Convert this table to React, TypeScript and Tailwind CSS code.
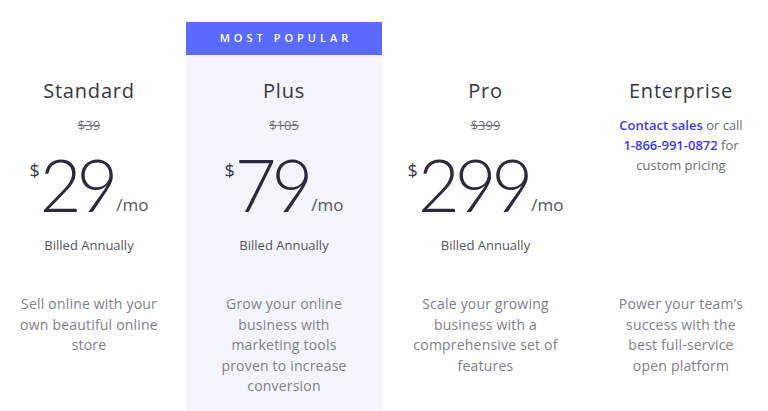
import React from 'react';

interface Plan {
  name: string;
  was: string;
  price: string;
  desc: string[];
}

const plans: Plan[] = [
  { name: 'Standard', was: '$39', price: '29', desc: ['Sell online with your', 'own beautiful online', 'store'] },
  {
    name: 'Plus',
    was: '$105',
    price: '79',
    desc: ['Grow your online', 'business with', 'marketing tools', 'proven to increase', 'conversion'],
  },
  { name: 'Pro', was: '$399', price: '299', desc: ['Scale your growing', 'business with a', 'comprehensive set of', 'features'] },
];

const Lines = ({ lines, className }: { lines: string[]; className: string }) => (
  <p className={className}>
    {lines.map((l, i) => (
      <span key={i} className="block whitespace-nowrap">
        {l}
      </span>
    ))}
  </p>
);

const PlanBody = ({ plan }: { plan: Plan }) => (
  <div className="flex flex-col items-center pt-[22px] text-center">
    <h2 className="text-[20px] leading-[28px] tracking-[0.8px] text-[#363640]">{plan.name}</h2>
    <div className="mt-[10px] text-[13px] leading-[20px] text-[#707077] line-through">{plan.was}</div>
    <div className="mt-[13px] flex items-start text-[#2b2a3d]">
      <span className="mt-[13px] text-[18px] leading-none text-[#3a3a48]">$</span>
      <span className="text-[72px] font-light leading-[72px] tracking-[-5px]" style={{ fontFamily: 'Lato, sans-serif' }}>
        {plan.price}
      </span>
      <span className="mb-[7px] ml-[3px] self-end text-[17px] leading-none text-[#55555e]">/mo</span>
    </div>
    <div className="mt-[15px] text-[13px] leading-[20px] text-[#55555c]">Billed Annually</div>
    <Lines
      lines={plan.desc}
      className="mt-[39px] text-[14px] leading-[20.5px] tracking-[0.2px] text-[#808087]"
    />
  </div>
);

const App: React.FC = () => {
  return (
    <div
      className="relative h-[411px] w-[768px] overflow-hidden bg-white"
      style={{ fontFamily: '"Open Sans", Lato, sans-serif' }}
    >
      <div className="flex h-full pt-[22px]">
        {/* Standard */}
        <div className="w-[178px] shrink-0 pt-[33px]">
          <PlanBody plan={plans[0]} />
        </div>

        {/* Plus - most popular */}
        <div className="ml-[8px] flex w-[196px] shrink-0 flex-col">
          <div className="flex h-[33px] items-center justify-center bg-[#5c6bff] pl-[4px] text-[11px] font-semibold tracking-[4px] text-white">
            MOST POPULAR
          </div>
          <div className="flex-1 bg-[#f4f4ff]">
            <PlanBody plan={plans[1]} />
          </div>
        </div>

        {/* Pro */}
        <div className="w-[207px] shrink-0 pt-[33px]">
          <PlanBody plan={plans[2]} />
        </div>

        {/* Enterprise */}
        <div className="w-[184px] shrink-0 pt-[33px]">
          <div className="flex flex-col items-center pt-[22px] text-center">
            <h2 className="text-[20px] leading-[28px] tracking-[0.8px] text-[#363640]">Enterprise</h2>
            <p className="mt-[10px] text-[13px] leading-[20px] text-[#6b6b72]">
              <span className="block whitespace-nowrap">
                <a className="font-semibold text-[#3b3bf2]">Contact sales</a> or call
              </span>
              <span className="block whitespace-nowrap">
                <a className="font-semibold text-[#3b3bf2]">1-866-991-0872</a> for
              </span>
              <span className="block whitespace-nowrap">custom pricing</span>
            </p>
            <Lines
              lines={['Power your team’s', 'success with the', 'best full-service', 'open platform']}
              className="mt-[119px] text-[14px] leading-[20.5px] tracking-[0.2px] text-[#808087]"
            />
          </div>
        </div>
      </div>
    </div>
  );
};

export default App;
